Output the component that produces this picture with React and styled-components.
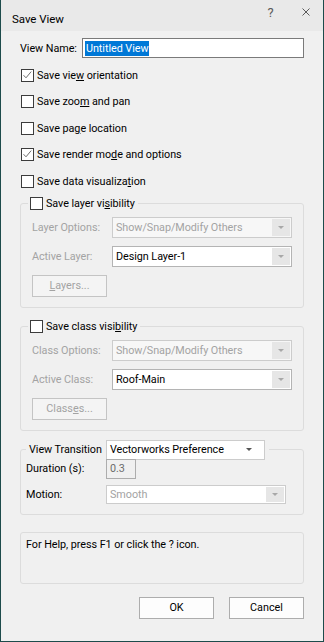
import styled, { createGlobalStyle } from 'styled-components';

const GlobalStyle = createGlobalStyle`
  html, body { margin: 0; padding: 0; background: #f0f0f0; }
  body {
    font-family: Roboto, "Liberation Sans", Arial, sans-serif;
    font-size: 10.8px;
    letter-spacing: -0.05px;
    color: #000;
  }
  * { box-sizing: border-box; }
`;

const Window = styled.div`
  width: 324px;
  height: 642px;
  background: #f0f0f0;
  border: 1px solid #1d4b4b;
  border-top: none;
  display: flex;
  flex-direction: column;
`;

const TitleBar = styled.div`
  height: 31px;
  flex-shrink: 0;
  background: #e9e9e9;
  display: flex;
  align-items: flex-start;
`;

const Title = styled.div`
  flex: 1;
  padding-left: 11px;
  margin-top: 11px;
  line-height: 16px;
  font-size: 11.5px;
`;

const TitleButton = styled.div`
  width: 35px;
  height: 24px;
  display: flex;
  align-items: center;
  justify-content: center;
  color: #5a5a5a;
  font-size: 13px;
`;

const Content = styled.div`
  padding: 0 19px;
  display: flex;
  flex-direction: column;
`;

const NameRow = styled.div`
  margin-top: 7px;
  height: 20px;
  display: flex;
  align-items: center;
`;

const NameLabel = styled.div`
  width: 62px;
`;

const TextInput = styled.div`
  flex: 1;
  height: 20px;
  border: 1px solid #7a7a7a;
  background: #fff;
  padding-left: 2px;
  display: flex;
  align-items: center;
`;

const Selected = styled.span`
  background: #0078d7;
  color: #fff;
  line-height: 15px;
  padding: 0 1px;
`;

const CheckList = styled.div`
  margin-top: 4px;
  display: flex;
  flex-direction: column;
`;

const CheckRow = styled.label`
  height: 26.5px;
  display: flex;
  align-items: center;
  gap: 3px;
  padding-left: 1px;
`;

const Box = styled.span`
  width: 13px;
  height: 13px;
  border: 1px solid #3c3c3c;
  background: #fff;
  display: flex;
  align-items: center;
  justify-content: center;
  flex-shrink: 0;
`;

const Group = styled.fieldset`
  margin: ${p => p.$mt}px 0 0 0;
  padding: 0;
  border: 1px solid #dcdcdc;
  border-radius: 3px;
  min-width: 0;
`;

const Legend = styled.legend`
  margin-left: ${p => p.$ml}px;
  padding: ${p => p.$pad};
`;

const LegendInner = styled.span`
  display: flex;
  align-items: center;
  gap: ${p => p.$gap}px;
  height: ${p => p.$h}px;
`;

const GroupBody = styled.div`
  padding: ${p => p.$pad};
  margin-top: ${p => p.$mt || 0}px;
  display: flex;
  flex-direction: column;
  gap: ${p => p.$gap}px;
`;

const FieldRow = styled.div`
  display: flex;
  align-items: center;
  height: ${p => p.$h}px;
`;

const FieldLabel = styled.div`
  width: 80px;
  flex-shrink: 0;
  color: ${p => (p.$disabled ? '#a3a3a3' : '#000')};
`;

const Combo = styled.div`
  height: ${p => p.$h}px;
  ${p => (p.$w ? `width: ${p.$w}px;` : 'flex: 1;')}
  border: 1px solid ${p => (p.$light ? '#cccccc' : '#b4b4b4')};
  background: ${p => p.$bg};
  color: ${p => p.$color};
  display: flex;
  align-items: center;
  padding-left: 3px;
`;

const ComboText = styled.span`
  flex: 1;
  white-space: nowrap;
`;

const ArrowBox = styled.span`
  align-self: stretch;
  width: 18px;
  margin: 1px;
  background: ${p => (p.$plain ? 'transparent' : '#e6e6e6')};
  display: flex;
  align-items: center;
  justify-content: center;
  margin-right: ${p => (p.$plain ? 6 : 1)}px;
`;

const Triangle = styled.span`
  width: 0;
  height: 0;
  border-left: 3px solid transparent;
  border-right: 3px solid transparent;
  border-top: 3px solid ${p => p.$color};
`;

const SmallInput = styled.div`
  width: 30px;
  height: 20px;
  border: 1px solid #adadad;
  background: #f0f0f0;
  color: #6d6d6d;
  padding-left: 3px;
  display: flex;
  align-items: center;
`;

const Button = styled.button`
  width: ${p => p.$w || 75}px;
  height: 22px;
  padding: 0;
  font: inherit;
  border: 1px solid ${p => (p.disabled ? '#c4c4c4' : '#adadad')};
  background: ${p => (p.disabled ? '#f4f4f4' : '#fdfdfd')};
  color: ${p => (p.disabled ? '#a3a3a3' : '#000')};
  flex-shrink: 0;
`;

const HelpBox = styled.div`
  margin-top: 17px;
  height: 52px;
  border: 1px solid #dcdcdc;
  border-radius: 3px;
  padding: 4px 5px;
  line-height: 16px;
`;

const ButtonRow = styled.div`
  margin-top: 13px;
  display: flex;
  justify-content: flex-end;
  gap: 15px;
`;

const Check = ({ on }) => (
  <Box>
    {on && (
      <svg width="11" height="11" viewBox="0 0 11 11">
        <path d="M1.5 5.2 L4 7.8 L9.2 1.6" fill="none" stroke="#6e6e6e" strokeWidth="1" />
      </svg>
    )}
  </Box>
);

const Dropdown = ({ text, w, h = 21, bg = '#fff', color = '#000', arrow = '#a8a8a8', plain, light }) => (
  <Combo $w={w} $h={h} $bg={bg} $color={color} $light={light}>
    <ComboText>{text}</ComboText>
    <ArrowBox $plain={plain}>
      <Triangle $color={arrow} />
    </ArrowBox>
  </Combo>
);

const VisibilityGroup = ({ mt, title, optionsLabel, activeLabel, activeValue, button }) => (
  <Group $mt={mt}>
    <Legend $ml={7} $pad="0 3px 0 2px">
      <LegendInner $gap={3} $h={16}>
        <Check />
        <span>{title}</span>
      </LegendInner>
    </Legend>
    <GroupBody $pad="5px 11px 10px 11px" $gap={8}>
      <FieldRow $h={21}>
        <FieldLabel $disabled>{optionsLabel}</FieldLabel>
        <Dropdown text="Show/Snap/Modify Others" bg="#f7f7f7" color="#a3a3a3" light />
      </FieldRow>
      <FieldRow $h={21}>
        <FieldLabel $disabled>{activeLabel}</FieldLabel>
        <Dropdown text={activeValue} />
      </FieldRow>
      <FieldRow $h={22}>
        <Button disabled>{button}</Button>
      </FieldRow>
    </GroupBody>
  </Group>
);

const Close = () => (
  <svg width="8" height="8" viewBox="0 0 8 8">
    <path d="M0.5 0.5 L7.5 7.5 M7.5 0.5 L0.5 7.5" stroke="#5a5a5a" strokeWidth="1" />
  </svg>
);

export default function App() {
  return (
    <>
      <GlobalStyle />
      <Window>
        <TitleBar>
          <Title>Save View</Title>
          <TitleButton>?</TitleButton>
          <TitleButton><Close /></TitleButton>
        </TitleBar>
        <Content>
          <NameRow>
            <NameLabel>View Name:</NameLabel>
            <TextInput><Selected>Untitled View</Selected></TextInput>
          </NameRow>

          <CheckList>
            <CheckRow><Check on /><span>Save vie<u>w</u> orientation</span></CheckRow>
            <CheckRow><Check /><span>Save zoo<u>m</u> and pan</span></CheckRow>
            <CheckRow><Check /><span>Save pa<u>g</u>e location</span></CheckRow>
            <CheckRow><Check on /><span>Save render mo<u>d</u>e and options</span></CheckRow>
            <CheckRow><Check /><span>Save data visualiza<u>t</u>ion</span></CheckRow>
          </CheckList>

          <VisibilityGroup
            mt={1}
            title={<>Save layer vi<u>s</u>ibility</>}
            optionsLabel="Layer Options:"
            activeLabel="Active Layer:"
            activeValue="Design Layer-1"
            button={<><u>L</u>ayers...</>}
          />
          <VisibilityGroup
            mt={11}
            title={<>Save class visi<u>b</u>ility</>}
            optionsLabel="Class Options:"
            activeLabel="Active Class:"
            activeValue="Roof-Main"
            button={<>Class<u>e</u>s...</>}
          />

          <Group $mt={9}>
            <Legend $ml={5} $pad="0 4px 0 3px">
              <LegendInner $gap={4} $h={20}>
                <span>View Transition</span>
                <Dropdown text="Vectorworks Preference" w={159} h={20} arrow="#555" plain light />
              </LegendInner>
            </Legend>
            <GroupBody $pad="0 17px 10px 5px" $mt={-1} $gap={6}>
              <FieldRow $h={20}>
                <FieldLabel>Duration (s):</FieldLabel>
                <SmallInput>0.3</SmallInput>
              </FieldRow>
              <FieldRow $h={19}>
                <FieldLabel>Motion:</FieldLabel>
                <Dropdown text="Smooth" h={19} color="#a3a3a3" light />
              </FieldRow>
            </GroupBody>
          </Group>

          <HelpBox>For Help, press F1 or click the ? icon.</HelpBox>

          <ButtonRow>
            <Button>OK</Button>
            <Button>Cancel</Button>
          </ButtonRow>
        </Content>
      </Window>
    </>
  );
}
